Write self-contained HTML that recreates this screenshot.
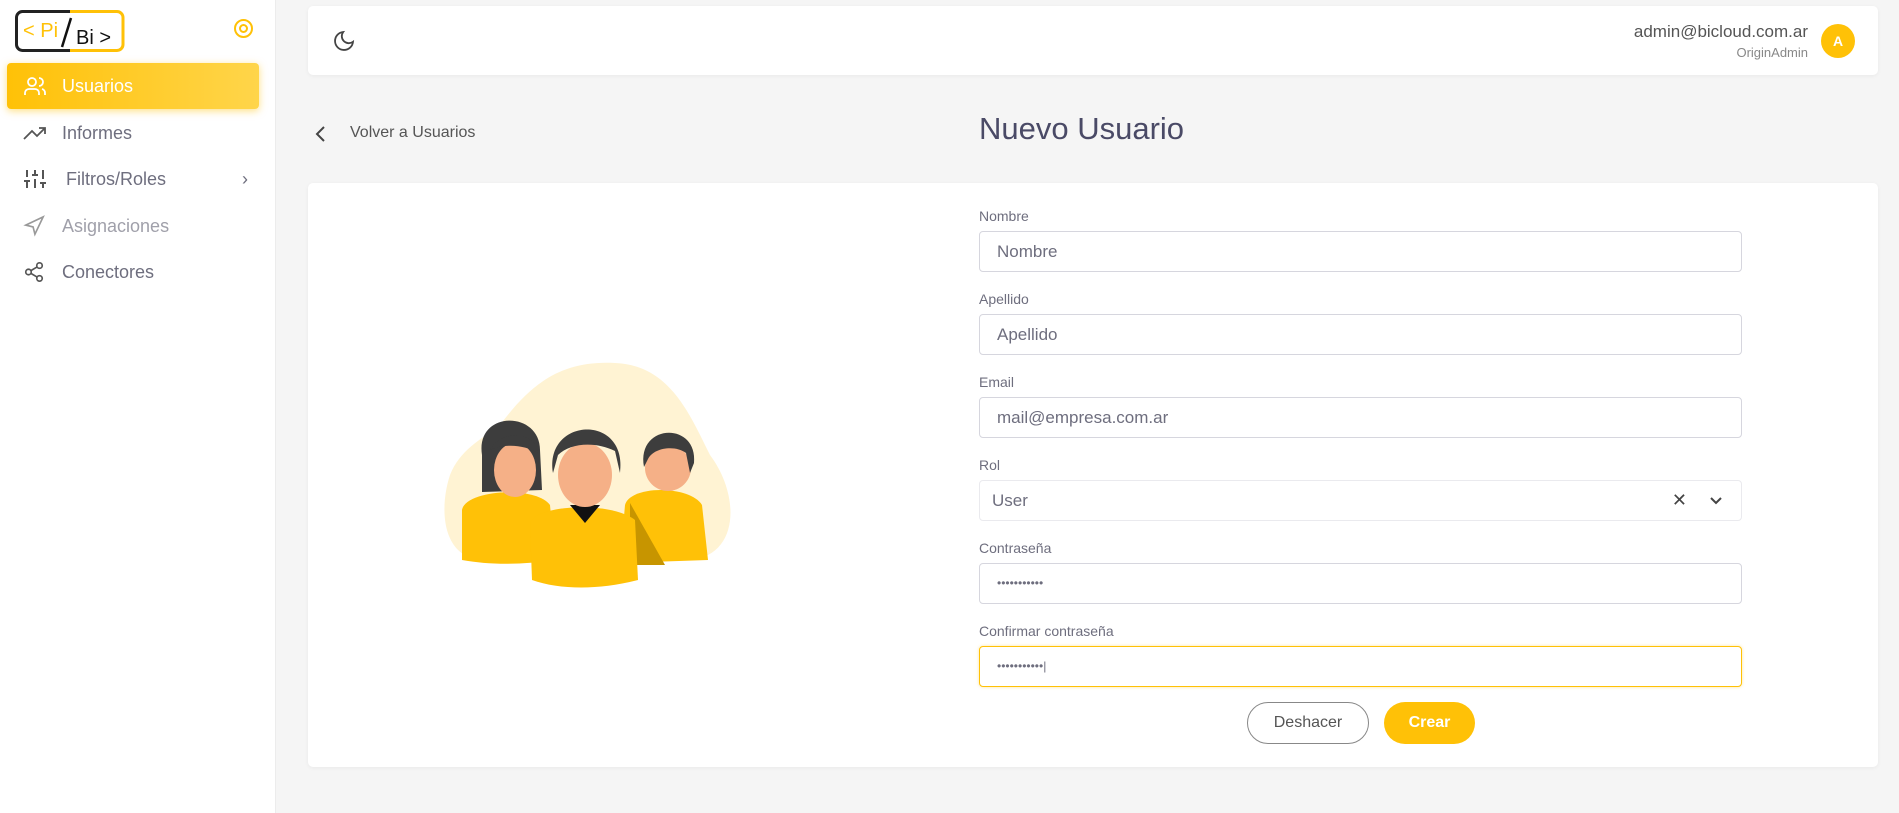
<!DOCTYPE html>
<html><head><meta charset="utf-8"><style>
*{box-sizing:border-box;margin:0;padding:0}
body{width:1899px;height:813px;background:#f5f5f5;font-family:"Liberation Sans",sans-serif;color:#5a5a6e;position:relative;overflow:hidden}
.side{position:absolute;left:0;top:0;width:276px;height:813px;background:#fff;border-right:1px solid #ececec}
.logo{position:absolute;left:15px;top:10px;width:110px;height:42px}
.item{position:absolute;left:7px;width:252px;height:46px;display:flex;align-items:center;font-size:18px;color:#6e6e7e}
.item svg{position:absolute;left:16px}
.item span{position:absolute;left:55px}
.active{background:linear-gradient(90deg,#ffc107,#ffd54a);color:#fff;border-radius:4px;box-shadow:0 2px 8px rgba(255,193,7,.5)}
.hdr{position:absolute;left:308px;top:6px;width:1570px;height:69px;background:#fff;border-radius:5px;box-shadow:0 1px 4px rgba(0,0,0,.05)}
.card{position:absolute;left:308px;top:183px;width:1570px;height:584px;background:#fff;border-radius:5px;box-shadow:0 1px 4px rgba(0,0,0,.05)}
.lbl{position:absolute;left:979px;font-size:14px;color:#6e6e7e}
.inp{position:absolute;left:979px;width:763px;height:41px;border:1px solid #d6d6de;border-radius:4px;background:#fff;font-size:17px;color:#6e6e7e;padding-left:17px;line-height:39px}
.btn{position:absolute;top:702px;height:42px;border-radius:21px;font-size:16px;display:flex;align-items:center;justify-content:center}
</style></head><body>
<div class="side">
 <svg class="logo" viewBox="0 0 110 42"><rect x="1.5" y="1.5" width="70" height="39" rx="6" fill="none" stroke="#222" stroke-width="3"/><path d="M55 1.5H102a6 6 0 0 1 6 6V34.5a6 6 0 0 1-6 6H55" fill="#fff" stroke="#ffc107" stroke-width="3"/><text x="8" y="27" font-size="20" fill="#ffc107" font-family="Liberation Sans">&lt; Pi</text><path d="M56 8 L47 37" stroke="#111" stroke-width="2.5"/><text x="61" y="34" font-size="20" fill="#111" font-family="Liberation Sans">Bi &gt;</text></svg>
 <svg style="position:absolute;left:233px;top:18px" width="21" height="21" viewBox="0 0 21 21"><circle cx="10.5" cy="10.5" r="8.5" fill="none" stroke="#ffc107" stroke-width="2"/><circle cx="10.5" cy="10.5" r="3.5" fill="none" stroke="#ffc107" stroke-width="2"/></svg>
 <div class="item active" style="top:63px"><svg width="24" height="24" viewBox="0 0 24 24" fill="none" stroke="#fff" stroke-width="1.8"><circle cx="9" cy="8" r="4"/><path d="M2 21v-2a4 4 0 0 1 4-4h6a4 4 0 0 1 4 4v2M16 4a4 4 0 0 1 0 8M22 21v-2a4 4 0 0 0-3-4"/></svg><span>Usuarios</span></div>
 <div class="item" style="top:110px"><svg width="24" height="24" viewBox="0 0 24 24" fill="none" stroke="#555" stroke-width="1.8"><path d="M1 18l8-8 5 5 8-8M16 7h6v6"/></svg><span>Informes</span></div>
 <div class="item" style="top:156px"><svg width="24" height="24" viewBox="0 0 24 24" fill="none" stroke="#555" stroke-width="2"><path d="M4 21v-7M4 10V3M12 21v-9M12 8V3M20 21v-5M20 12V3M1 14h6M9 8h6M17 16h6"/></svg><span style="left:59px">Filtros/Roles</span><span style="left:235px;font-size:18px">›</span></div>
 <div class="item" style="top:203px;color:#a0a0aa"><svg width="22" height="22" viewBox="0 0 24 24" fill="none" stroke="#999" stroke-width="1.8"><path d="M3 11l19-9-9 19-2-8-8-2z"/></svg><span>Asignaciones</span></div>
 <div class="item" style="top:249px"><svg width="22" height="22" viewBox="0 0 24 24" fill="none" stroke="#555" stroke-width="1.8"><circle cx="18" cy="5" r="3"/><circle cx="6" cy="12" r="3"/><circle cx="18" cy="19" r="3"/><path d="M8.6 13.5l6.8 4M15.4 6.5l-6.8 4"/></svg><span>Conectores</span></div>
</div>
<div class="hdr">
 <svg style="position:absolute;left:24px;top:23px" width="24" height="24" viewBox="0 0 24 24" fill="none" stroke="#444" stroke-width="1.8"><path d="M21 12.8A9 9 0 1 1 11.2 3a7 7 0 0 0 9.8 9.8z"/></svg>
 <div style="position:absolute;right:70px;top:16px;font-size:17px;color:#555">admin@bicloud.com.ar</div>
 <div style="position:absolute;right:70px;top:39px;font-size:13px;color:#888">OriginAdmin</div>
 <div style="position:absolute;left:1513px;top:18px;width:34px;height:34px;border-radius:50%;background:#ffc107;color:#fff;font-size:14px;font-weight:bold;text-align:center;line-height:34px">A</div>
</div>
<svg style="position:absolute;left:314px;top:124px" width="14" height="20" viewBox="0 0 14 20" fill="none" stroke="#444" stroke-width="2"><path d="M10 3L3 10l7 7"/></svg>
<div style="position:absolute;left:350px;top:124px;font-size:16px;color:#555">Volver a Usuarios</div>
<div style="position:absolute;left:979px;top:111px;font-size:31px;color:#4a4a66">Nuevo Usuario</div>
<div class="card"></div>
<svg style="position:absolute;left:440px;top:355px" width="320" height="240" viewBox="0 0 320 240">
 <path d="M60 70 C90 30 120 5 175 8 C230 10 250 60 270 100 C300 140 300 200 250 205 L40 205 C0 200 0 150 10 120 C20 95 40 85 60 70Z" fill="#fff3d3"/>
 <path d="M185 150 C190 130 250 130 262 150 L268 205 L180 208Z" fill="#ffc107"/><path d="M190 148 L225 210 L190 210Z" fill="#c79500"/>
 <circle cx="228" cy="113" r="23" fill="#f5b087"/><path d="M204 112 C196 68 258 66 254 108 L250 118 L246 98 C236 90 214 92 208 104Z" fill="#3d3d3d"/>
 <path d="M22 155 C25 135 95 130 110 150 L115 205 C80 210 50 210 22 205Z" fill="#ffc107"/>
 <path d="M42 100 C35 55 100 55 100 95 L102 135 L42 137Z" fill="#3d3d3d"/><ellipse cx="75" cy="115" rx="21" ry="27" fill="#f5b087"/><path d="M50 95 C60 75 95 75 98 98 C85 90 65 88 50 95Z" fill="#3d3d3d"/>
 <path d="M90 170 C90 150 170 145 195 165 L198 225 C160 235 120 235 92 225Z" fill="#ffc107"/><path d="M130 150 L160 150 L145 168Z" fill="#111"/>
 <ellipse cx="145" cy="120" rx="27" ry="32" fill="#f5b087"/><path d="M113 118 C104 62 188 58 180 118 L175 96 C155 86 130 88 118 100Z" fill="#3d3d3d"/>
</svg>
<div class="lbl" style="top:208px">Nombre</div><div class="inp" style="top:231px">Nombre</div>
<div class="lbl" style="top:291px">Apellido</div><div class="inp" style="top:314px">Apellido</div>
<div class="lbl" style="top:374px">Email</div><div class="inp" style="top:397px">mail@empresa.com.ar</div>
<div class="lbl" style="top:457px">Rol</div><div class="inp" style="top:480px;border-color:#eaeaee;padding-left:12px">User
 <span style="position:absolute;right:54px;top:0;font-size:18px;color:#444">✕</span>
 <svg style="position:absolute;right:18px;top:14px" width="14" height="12" viewBox="0 0 14 12" fill="none" stroke="#444" stroke-width="2"><path d="M2 3l5 5 5-5"/></svg></div>
<div class="lbl" style="top:540px">Contraseña</div><div class="inp" style="top:563px;font-size:12px">•••••••••••</div>
<div class="lbl" style="top:623px">Confirmar contraseña</div><div class="inp" style="top:646px;font-size:12px;border-color:#ffc107;box-shadow:0 0 3px rgba(255,193,7,.4)">•••••••••••|</div>
<div class="btn" style="left:1247px;width:122px;border:1px solid #888;color:#555;background:#fff">Deshacer</div>
<div class="btn" style="left:1384px;width:91px;background:#ffc107;color:#fff;font-weight:bold">Crear</div>
</body></html>
